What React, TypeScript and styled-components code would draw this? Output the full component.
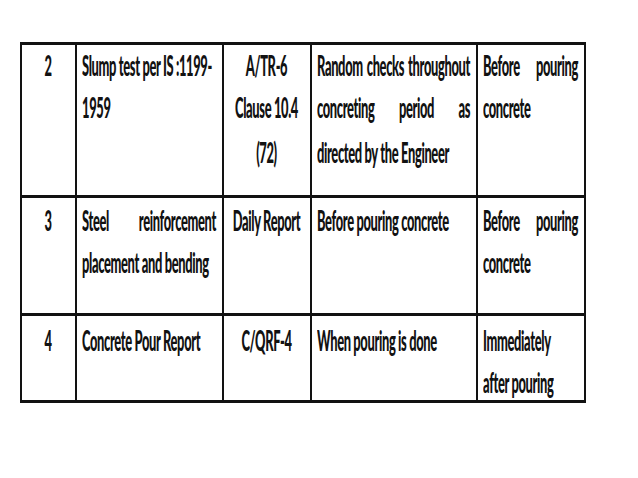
import React, { FC } from 'react'
import styled, { createGlobalStyle } from 'styled-components'

const INK = '#121212'
const STRETCH = 2.22

const GlobalStyle = createGlobalStyle`
  html, body {
    margin: 0;
    background: #ffffff;
  }
  body {
    font-family: Lato, "Open Sans", sans-serif;
    color: ${INK};
  }
`

const Page = styled.div`
  width: 638px;
  height: 478px;
  padding: 42px 0 0 20px;
  box-sizing: border-box;
`

const Grid = styled.div`
  display: grid;
  grid-template-columns: 55px 147px 88px 166px 108px;
  grid-template-rows: 153px 118px 87px;
  width: max-content;
  border-top: 3px solid ${INK};
  border-left: 2px solid ${INK};
`

const Cell = styled.div<{ $top: number }>`
  box-sizing: border-box;
  border-right: 2px solid ${INK};
  border-bottom: 3px solid ${INK};
  padding: ${(p) => p.$top}px 6px 0 5px;
`

// the source slide was stretched tall, so text is squeezed to width and scaled up
const Text = styled.div<{ $align: 'left' | 'center' }>`
  transform: scaleY(${STRETCH});
  transform-origin: top left;
  font-size: 12.9px;
  font-weight: 900;
  line-height: 19.4px;
  letter-spacing: -0.35px;
  text-align: ${(p) => p.$align};
`

const Line = styled.div`
  white-space: nowrap;
`

const JustLine = styled.div`
  display: flex;
  justify-content: space-between;
  white-space: nowrap;
`

type Ln = string | { j: string }

interface CellProps {
  lines: Ln[]
  center?: boolean
}

const TableCell: FC<CellProps & { top: number }> = ({ lines, center, top }) => (
  <Cell $top={top}>
    <Text $align={center ? 'center' : 'left'}>
      {lines.map((l, i) =>
        typeof l === 'string' ? (
          <Line key={i}>{l}</Line>
        ) : (
          <JustLine key={i}>
            {l.j.split(' ').map((w, k) => (
              <span key={k}>{w}</span>
            ))}
          </JustLine>
        )
      )}
    </Text>
  </Cell>
)

const rowTops = [0, 2, 4]

const rows: CellProps[][] = [
  [
    { lines: ['2'], center: true },
    { lines: ['Slump test per IS :1199-', '1959'] },
    { lines: ['A/TR-6', 'Clause 10.4', '(72)'], center: true },
    {
      lines: [
        { j: 'Random checks throughout' },
        { j: 'concreting period as' },
        'directed by the Engineer',
      ],
    },
    { lines: [{ j: 'Before pouring' }, 'concrete'] },
  ],
  [
    { lines: ['3'], center: true },
    { lines: [{ j: 'Steel reinforcement' }, 'placement and bending'] },
    { lines: ['Daily Report'], center: true },
    { lines: ['Before pouring concrete'] },
    { lines: [{ j: 'Before pouring' }, 'concrete'] },
  ],
  [
    { lines: ['4'], center: true },
    { lines: ['Concrete Pour Report'] },
    { lines: ['C/QRF-4'], center: true },
    { lines: ['When pouring is done'] },
    { lines: ['Immediately', 'after pouring'] },
  ],
]

const App: FC = () => (
  <>
    <GlobalStyle />
    <Page>
      <Grid>
        {rows.map((row, r) =>
          row.map((c, i) => (
            <TableCell key={`${r}-${i}`} top={rowTops[r]} {...c} />
          ))
        )}
      </Grid>
    </Page>
  </>
)

export default App
